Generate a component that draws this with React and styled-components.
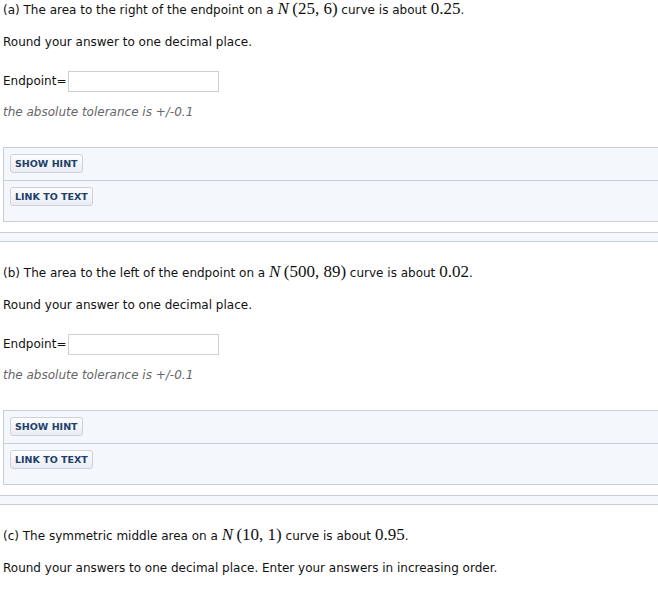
import React from "react";
import styled, { createGlobalStyle } from "styled-components";

const GlobalStyle = createGlobalStyle`
  body {
    margin: 0;
    background: #fff;
    overflow: hidden;
    font-family: "DejaVu Sans", Verdana, sans-serif;
    font-size: 12px;
    color: #111;
  }
`;

const Page = styled.div`
  width: 658px;
`;

const Section = styled.div`
  padding: ${(p) => (p.first ? "0" : "21px")} 0 0 3px;
`;

const Para = styled.p`
  margin: 0 0 12px 0;
  height: 20px;
  line-height: 20px;
  white-space: nowrap;
`;

// math bits in Times-like serif
const Math = styled.span`
  font-family: "Liberation Serif", "Times New Roman", serif;
  font-size: 17px;
  line-height: 1;
`;

const MathVar = styled.i`
  font-family: "Liberation Serif", "Times New Roman", serif;
  font-size: 17px;
  line-height: 1;
`;

const AnswerRow = styled.div`
  display: flex;
  align-items: center;
  margin-top: 19px;
  height: 21px;
`;

const Label = styled.span`
  line-height: 21px;
`;

const Input = styled.input`
  box-sizing: border-box;
  width: 151px;
  height: 21px;
  margin: 0 0 0 2px;
  border: 1px solid #cfcfcf;
  background: #fff;
  padding: 0 3px;
`;

const Tolerance = styled.div`
  margin-top: 10px;
  height: 20px;
  line-height: 20px;
  font-style: italic;
  color: #666;
`;

const HintBox = styled.div`
  margin-top: 25px;
  width: 680px;
  border: 1px solid #c9cfd9;
  background: #f4f7fb;
`;

const HintRow = styled.div`
  display: flex;
  align-items: flex-start;
  padding: 6px 6px ${(p) => (p.last ? "15px" : "7px")};
  border-top: ${(p) => (p.last ? "1px solid #c9cfd9" : "none")};
`;

const HintButton = styled.button`
  box-sizing: border-box;
  height: 19px;
  padding: 0 4px;
  border: 1px solid #cdd2da;
  border-radius: 3px;
  background: linear-gradient(#fdfdfe, #e9edf2);
  color: #23416b;
  font-family: "DejaVu Sans", Verdana, sans-serif;
  font-size: 9.5px;
  font-weight: bold;
  line-height: 17px;
  cursor: pointer;
`;

const Separator = styled.div`
  margin-top: 10px;
  height: 8px;
  border-top: 1px solid #c9cfd9;
  border-bottom: 1px solid #c9cfd9;
  background: #f4f7fb;
`;

const parts = [
  {
    lead: "(a) The area to the right of the endpoint on a ",
    params: "(25, 6)",
    area: "0.25",
  },
  {
    lead: "(b) The area to the left of the endpoint on a ",
    params: "(500, 89)",
    area: "0.02",
  },
];

const Question = ({ lead, params, area }) => (
  <Para>
    {lead}
    <MathVar>N</MathVar>
    <Math>&thinsp;{params}</Math> curve is about <Math>{area}</Math>.
  </Para>
);

export default function App() {
  return (
    <Page>
      <GlobalStyle />
      {parts.map((p, i) => (
        <React.Fragment key={i}>
          <Section first={i === 0}>
            <Question {...p} />
            <Para>Round your answer to one decimal place.</Para>
            <AnswerRow>
              <Label>Endpoint=</Label>
              <Input type="text" />
            </AnswerRow>
            <Tolerance>the absolute tolerance is +/-0.1</Tolerance>
            <HintBox>
              <HintRow>
                <HintButton>SHOW HINT</HintButton>
              </HintRow>
              <HintRow last>
                <HintButton>LINK TO TEXT</HintButton>
              </HintRow>
            </HintBox>
          </Section>
          <Separator />
        </React.Fragment>
      ))}
      <Section>
        <Question
          lead="(c) The symmetric middle area on a "
          params="(10, 1)"
          area="0.95"
        />
        <Para>
          Round your answers to one decimal place. Enter your answers in
          increasing order.
        </Para>
      </Section>
    </Page>
  );
}
